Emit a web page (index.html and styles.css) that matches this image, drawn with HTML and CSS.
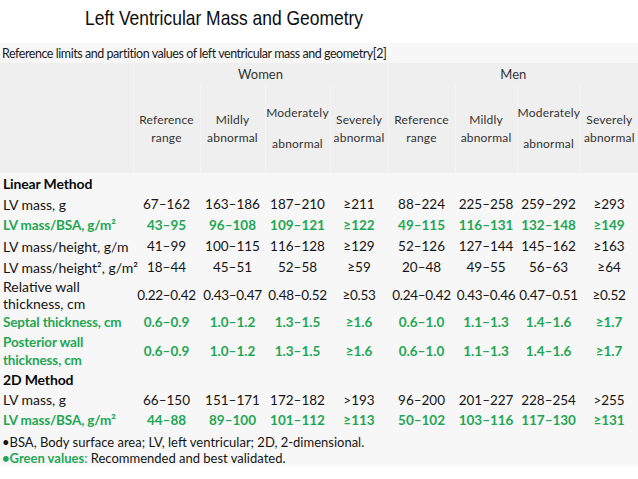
FILE: index.html
```html
<!DOCTYPE html>
<html lang="en">
<head>
<meta charset="utf-8">
<title>Left Ventricular Mass and Geometry</title>
<link rel="stylesheet" href="styles.css">
</head>
<body>
<h1 class="title"><span class="title-text">Left Ventricular Mass and Geometry</span></h1>
<div class="sheet">
  <div class="caption">Reference limits and partition values of left ventricular mass and geometry[2]</div>
  <table class="grid">
    <colgroup>
      <col class="c-label"><col class="c-ref"><col class="c-mild"><col class="c-mod"><col class="c-sev">
      <col class="c-ref2"><col class="c-mild2"><col class="c-mod2"><col class="c-sev2">
    </colgroup>
    <thead>
      <tr class="group">
        <th></th><th colspan="4">Women</th><th colspan="4">Men</th>
      </tr>
      <tr class="sub">
        <th></th>
        <th>Reference<br>range</th>
        <th>Mildly<br>abnormal</th>
        <th><div class="split"><span>Moderately</span><span>abnormal</span></div></th>
        <th>Severely<br>abnormal</th>
        <th>Reference<br>range</th>
        <th>Mildly<br>abnormal</th>
        <th><div class="split"><span>Moderately</span><span>abnormal</span></div></th>
        <th>Severely<br>abnormal</th>
      </tr>
    </thead>
    <tbody>
      <tr class="section"><td colspan="9">Linear Method</td></tr>
      <tr><td>LV mass, g</td><td>67–162</td><td>163–186</td><td>187–210</td><td>≥211</td><td>88–224</td><td>225–258</td><td>259–292</td><td>≥293</td></tr>
      <tr class="green"><td>LV mass/BSA, g/m²</td><td>43–95</td><td>96–108</td><td>109–121</td><td>≥122</td><td>49–115</td><td>116–131</td><td>132–148</td><td>≥149</td></tr>
      <tr><td>LV mass/height, g/m</td><td>41–99</td><td>100–115</td><td>116–128</td><td>≥129</td><td>52–126</td><td>127–144</td><td>145–162</td><td>≥163</td></tr>
      <tr><td>LV mass/height², g/m²</td><td>18–44</td><td>45–51</td><td>52–58</td><td>≥59</td><td>20–48</td><td>49–55</td><td>56–63</td><td>≥64</td></tr>
      <tr class="double decimals"><td>Relative wall<br>thickness, cm</td><td>0.22–0.42</td><td>0.43–0.47</td><td>0.48–0.52</td><td>≥0.53</td><td>0.24–0.42</td><td>0.43–0.46</td><td>0.47–0.51</td><td>≥0.52</td></tr>
      <tr class="green"><td>Septal thickness, cm</td><td>0.6–0.9</td><td>1.0–1.2</td><td>1.3–1.5</td><td>≥1.6</td><td>0.6–1.0</td><td>1.1–1.3</td><td>1.4–1.6</td><td>≥1.7</td></tr>
      <tr class="green double tall"><td>Posterior wall<br>thickness, cm</td><td>0.6–0.9</td><td>1.0–1.2</td><td>1.3–1.5</td><td>≥1.6</td><td>0.6–1.0</td><td>1.1–1.3</td><td>1.4–1.6</td><td>≥1.7</td></tr>
      <tr class="section"><td colspan="9">2D Method</td></tr>
      <tr class="short"><td>LV mass, g</td><td>66–150</td><td>151–171</td><td>172–182</td><td>&gt;193</td><td>96–200</td><td>201–227</td><td>228–254</td><td>&gt;255</td></tr>
      <tr class="green short"><td>LV mass/BSA, g/m²</td><td>44–88</td><td>89–100</td><td>101–112</td><td>≥113</td><td>50–102</td><td>103–116</td><td>117–130</td><td>≥131</td></tr>
    </tbody>
  </table>
  <div class="notes">
    <p>•BSA, Body surface area; LV, left ventricular; 2D, 2-dimensional.</p>
    <p><span class="hl">•Green values</span><span class="hl-colon">:</span> Recommended and best validated.</p>
  </div>
</div>
</body>
</html>
```

FILE: styles.css
```css
html, body {
  margin: 0;
  padding: 0;
  background: #ffffff;
}

body {
  width: 638px;
  height: 479px;
  overflow: hidden;
  font-family: "Lato", "Open Sans", sans-serif;
  color: #141414;
}

.title {
  margin: 0;
  height: 43px;
  padding-left: 85px;
  box-sizing: border-box;
  font-family: "Liberation Sans", Arial, sans-serif;
  font-weight: normal;
  font-size: 21px;
  line-height: 36px;
  color: #0c0c0c;
  white-space: nowrap;
}

.title-text {
  display: inline-block;
  transform: scaleX(0.83);
  transform-origin: left center;
}

.sheet {
  background: #f7f7f7;
}

.caption {
  height: 20px;
  line-height: 21px;
  padding-left: 2px;
  font-size: 12.5px;
  letter-spacing: -0.45px;
  color: #1a1a1a;
  white-space: nowrap;
}

.grid {
  width: 638px;
  border-collapse: collapse;
  table-layout: fixed;
}

.c-label { width: 133px; }
.c-ref { width: 67px; }
.c-mild { width: 65px; }
.c-mod { width: 65px; }
.c-sev { width: 58px; }
.c-ref2 { width: 67px; }
.c-mild2 { width: 62px; }
.c-mod2 { width: 63px; }
.c-sev2 { width: 58px; }

.grid th {
  background: #efefef;
  font-weight: normal;
  color: #333333;
  font-size: 12px;
  padding: 0;
  text-align: center;
  border-left: 1px solid #f4f4f4;
}

.grid th:first-child {
  border-left: none;
}

.group th {
  height: 22px;
  line-height: 22px;
  font-size: 13px;
}

.sub th {
  height: 88px;
  line-height: 18px;
  letter-spacing: 0.2px;
}

.split {
  display: flex;
  flex-direction: column;
  gap: 13px;
  padding-bottom: 1px;
}

.grid td {
  padding: 0;
  height: 21px;
  line-height: 21px;
  font-size: 13.5px;
  text-align: center;
  white-space: nowrap;
}

.grid td:first-child {
  text-align: left;
  padding-left: 3px;
  font-size: 14px;
  overflow: visible;
}

.section td,
.green td:first-child {
  font-size: 13.5px;
  letter-spacing: -0.15px;
}

.section td {
  font-weight: bold;
  color: #0a0a0a;
}

.double td {
  height: 34px;
  line-height: 17px;
}

.decimals td {
  letter-spacing: -0.3px;
}

.decimals td:first-child {
  letter-spacing: 0;
}

.tall td {
  height: 36px;
  line-height: 18px;
}

.short td {
  height: 20px;
  line-height: 20px;
}

.green td {
  color: #1fa653;
  font-weight: bold;
}

.notes {
  padding: 4px 0 0 2px;
  height: 36px;
  box-sizing: border-box;
  font-size: 13px;
}

.notes p {
  margin: 0;
  line-height: 16px;
  white-space: nowrap;
}

.hl {
  color: #1fa653;
  font-weight: bold;
}

.hl-colon {
  color: #1fa653;
}
```
